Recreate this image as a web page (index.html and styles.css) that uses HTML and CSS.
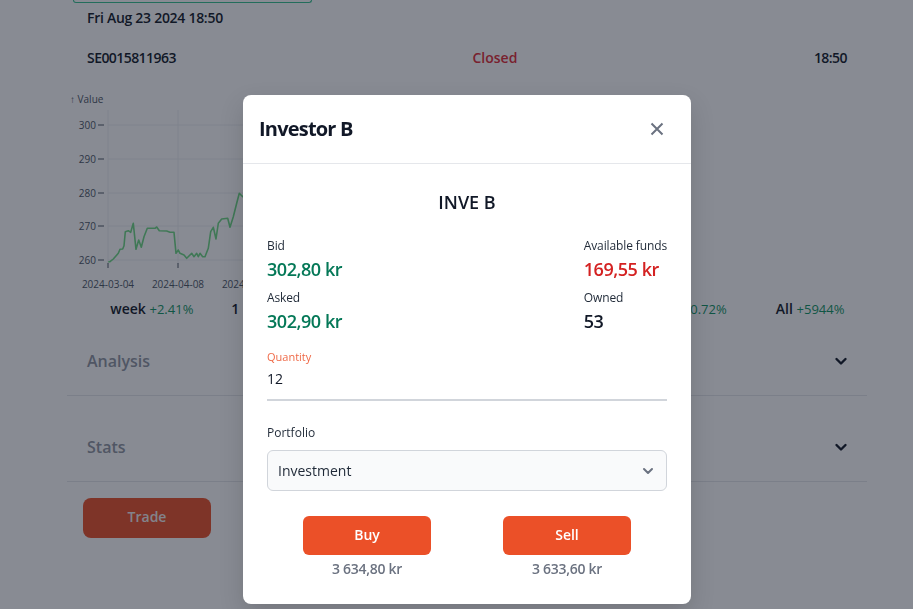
FILE: index.html
```html
<!DOCTYPE html>
<html lang="en">
<head>
    <meta charset="UTF-8">
    <meta name="viewport" content="width=device-width, initial-scale=1.0">
    <title>INVE B - Trade</title>
    <link rel="stylesheet" href="styles.css">
</head>
<body>
    <div class="page">
        <div class="top-card"></div>
        <div class="date">Fri Aug 23 2024 18:50</div>
        <div class="status-row">
            <span>SE0015811963</span>
            <span class="closed">Closed</span>
            <span>18:50</span>
        </div>
        <div class="chart">
            <svg width="800" height="200" viewBox="0 0 800 200">
                <text x="3" y="13" class="axis-label">↑ Value</text>
                <g class="grid">
                    <line x1="41" y1="35" x2="600" y2="35"/>
                    <line x1="41" y1="69" x2="600" y2="69"/>
                    <line x1="41" y1="103" x2="600" y2="103"/>
                    <line x1="41" y1="136" x2="600" y2="136"/>
                    <line x1="41" y1="170" x2="600" y2="170"/>
                    <line x1="41" y1="20" x2="41" y2="174"/>
                    <line x1="111" y1="20" x2="111" y2="174"/>
                    <line x1="181" y1="20" x2="181" y2="174"/>
                    <line x1="251" y1="20" x2="251" y2="174"/>
                    <line x1="321" y1="20" x2="321" y2="174"/>
                    <line x1="391" y1="20" x2="391" y2="174"/>
                    <line x1="461" y1="20" x2="461" y2="174"/>
                    <line x1="531" y1="20" x2="531" y2="174"/>
                </g>
                <g class="ticks">
                    <line x1="31" y1="35" x2="37" y2="35"/>
                    <line x1="31" y1="69" x2="37" y2="69"/>
                    <line x1="31" y1="103" x2="37" y2="103"/>
                    <line x1="31" y1="136" x2="37" y2="136"/>
                    <line x1="31" y1="170" x2="37" y2="170"/>
                    <line x1="41" y1="173" x2="41" y2="178"/>
                    <line x1="111" y1="173" x2="111" y2="178"/>
                    <line x1="181" y1="173" x2="181" y2="178"/>
                </g>
                <g class="axis-label" text-anchor="end">
                    <text x="29" y="38.5">300</text>
                    <text x="29" y="72.5">290</text>
                    <text x="29" y="106.5">280</text>
                    <text x="29" y="139.5">270</text>
                    <text x="29" y="173.5">260</text>
                </g>
                <g class="axis-label" text-anchor="middle">
                    <text x="41" y="197.5">2024-03-04</text>
                    <text x="111" y="197.5">2024-04-08</text>
                    <text x="181" y="197.5">2024-05-13</text>
                </g>
                <polyline class="price-line" points="41.3,171.7 43,171.7 46.3,169 51.3,163.3 53,159.3 55.7,159 57,155.7 58.3,141.7 61.3,140.7 63.7,142.3 66.3,133.3 69,159.3 71.7,150 74.3,157.3 77,146.7 80.3,138.3 88,138.3 89.7,137 92.3,140.7 99.7,141 103,142.3 107,142.3 109,163.3 111.3,160 113,163.3 117,165 119.7,168.3 124.7,163.3 127,166.7 129.7,163.3 131.3,166.7 133,163.3 135.7,166.7 138,166.7 141.3,158.3 143.7,141.7 146.3,137.3 149,149 151.3,133.3 154.7,129 160.7,128.3 163,137.3 166.3,126.7 169.7,113.3 172.3,103.3 175.7,106.7 190,100 210,90 240,80 280,60 320,50 360,40 400,30 440,25 480,20 520,15 560,10"/>
            </svg>
        </div>
        <div class="returns">
            <div class="ret">week <span class="up">+2.41%</span></div>
            <div class="ret">1 month <span class="up">+3.86%</span></div>
            <div class="ret">3 months <span class="up">+9.12%</span></div>
            <div class="ret">ytd <span class="up">+21.35%</span></div>
            <div class="ret">1 year <span class="up">+40.72%</span></div>
            <div class="ret">All <span class="up">+5944%</span></div>
        </div>
        <div class="accordion">
            <div class="acc-item">
                <span>Analysis</span>
                <svg class="chev" width="16" height="16" viewBox="0 0 16 16"><path d="M3.5 6l4.5 4.5 4.5-4.5"/></svg>
            </div>
            <div class="acc-item">
                <span>Stats</span>
                <svg class="chev" width="16" height="16" viewBox="0 0 16 16"><path d="M3.5 6l4.5 4.5 4.5-4.5"/></svg>
            </div>
        </div>
        <button class="trade">Trade</button>
    </div>

    <div class="overlay"></div>

    <div class="modal">
        <div class="modal-header">
            <h2>Investor B</h2>
            <button class="close" aria-label="Close">
                <svg width="16" height="16" viewBox="0 0 16 16"><path d="M2.5 2.5l11 11M13.5 2.5l-11 11"/></svg>
            </button>
        </div>
        <div class="modal-body">
            <h3>INVE B</h3>
            <div class="stats">
                <div>
                    <div class="stat-label">Bid</div>
                    <div class="stat-value green">302,80 kr</div>
                </div>
                <div>
                    <div class="stat-label">Available funds</div>
                    <div class="stat-value red">169,55 kr</div>
                </div>
                <div>
                    <div class="stat-label">Asked</div>
                    <div class="stat-value green">302,90 kr</div>
                </div>
                <div>
                    <div class="stat-label">Owned</div>
                    <div class="stat-value">53</div>
                </div>
            </div>
            <label class="qty-label" for="qty">Quantity</label>
            <input id="qty" class="qty-input" type="text" value="12">
            <label class="field-label" for="portfolio">Portfolio</label>
            <div class="select">
                <span>Investment</span>
                <svg width="14" height="14" viewBox="0 0 14 14"><path d="M3 5l4 4 4-4"/></svg>
            </div>
            <div class="actions">
                <div class="action">
                    <button class="btn">Buy</button>
                    <div class="total">3 634,80 kr</div>
                </div>
                <div class="action">
                    <button class="btn">Sell</button>
                    <div class="total">3 633,60 kr</div>
                </div>
            </div>
        </div>
    </div>
</body>
</html>
```

FILE: styles.css
```css
body {
    font-family: "Open Sans", "Noto Sans", sans-serif;
    margin: 0;
    padding: 0;
    background-color: white;
    color: #111827;
}
.page {
    width: 800px;
    margin-left: 67px;
}
.top-card {
    width: 237px;
    height: 2px;
    margin-left: 6px;
    border: 1px solid #34c38f;
    border-top: none;
    border-radius: 0 0 8px 8px;
}
.date {
    margin-top: 5px;
    padding-left: 20px;
    font-size: 14px;
    font-weight: 600;
    line-height: 20px;
    letter-spacing: -0.02em;
}
.status-row {
    display: flex;
    justify-content: space-between;
    margin-top: 20px;
    padding: 0 20px;
    font-size: 14px;
    font-weight: 600;
    line-height: 20px;
    letter-spacing: -0.04em;
}
.closed {
    color: #e02a35;
    letter-spacing: 0;
}
.chart {
    margin-top: 22px;
    height: 200px;
}
.chart svg {
    display: block;
}
.axis-label {
    font-size: 10px;
    fill: #4b5563;
}
.grid line {
    stroke: #eceef1;
    stroke-width: 1;
}
.ticks line {
    stroke: #4b5563;
    stroke-width: 1;
}
.price-line {
    fill: none;
    stroke: #6fd985;
    stroke-width: 1.6;
    stroke-linejoin: round;
}
.returns {
    display: grid;
    grid-template-columns: repeat(6, 1fr);
    width: 790px;
    margin-top: 9px;
    margin-left: 19px;
    font-size: 14px;
    font-weight: 600;
    line-height: 20px;
    text-align: center;
}
.up {
    color: #0f9463;
    font-size: 13px;
    font-weight: 500;
}
.accordion {
    margin-top: -9px;
}
.acc-item {
    display: flex;
    justify-content: space-between;
    align-items: center;
    padding: 39px 18px 22px 20px;
    border-bottom: 1px solid #e5e7eb;
    font-size: 16px;
    font-weight: 600;
    line-height: 24px;
    color: #8f95a1;
}
.chev path, .select path {
    fill: none;
    stroke: #111827;
    stroke-width: 2.4;
    stroke-linecap: round;
    stroke-linejoin: round;
}
.trade {
    display: block;
    width: 128px;
    height: 40px;
    margin: 16px 0 0 16px;
    padding: 0 0 3px;
    border: none;
    border-radius: 8px;
    background-color: #eb5028;
    color: #f3eeee;
    font-family: inherit;
    font-size: 14px;
    font-weight: 600;
}
.overlay {
    position: fixed;
    inset: 0;
    background-color: rgba(17, 24, 39, 0.5);
}
.modal {
    position: fixed;
    top: 95px;
    left: 243px;
    width: 448px;
    height: 509px;
    box-sizing: border-box;
    background-color: white;
    border-radius: 8px;
    box-shadow: 0 10px 25px rgba(0, 0, 0, 0.15);
}
.modal-header {
    display: flex;
    justify-content: space-between;
    align-items: center;
    height: 68px;
    padding: 0 22px 0 16px;
    border-bottom: 1px solid #e5e7eb;
}
.modal-header h2 {
    margin: 0 0 2px;
    font-size: 20px;
    font-weight: 700;
    letter-spacing: -0.04em;
}
.close {
    width: 24px;
    height: 24px;
    padding: 4px;
    border: none;
    background: none;
}
.close path {
    stroke: #6b7280;
    stroke-width: 2;
    fill: none;
}
.modal-body {
    padding: 0 24px;
}
.modal-body h3 {
    margin: 26px 0 0;
    text-align: center;
    font-size: 18px;
    font-weight: 600;
    line-height: 24px;
}
.stats {
    display: grid;
    grid-template-columns: 1fr auto;
    row-gap: 9px;
    margin-top: 24px;
}
.stat-label {
    font-size: 12px;
    line-height: 16px;
    color: #1f2937;
    letter-spacing: -0.01em;
}
.stat-value {
    margin-top: 3px;
    font-size: 18px;
    font-weight: 600;
    line-height: 24px;
    letter-spacing: -0.025em;
}
.green {
    color: #047857;
}
.red {
    color: #d42222;
}
.qty-label {
    display: block;
    margin-top: 17px;
    font-size: 11px;
    line-height: 14px;
    color: #ef6a48;
}
.qty-input {
    display: block;
    width: 100%;
    box-sizing: border-box;
    padding: 5px 0 10px;
    border: none;
    border-bottom: 2px solid #d1d5db;
    outline: none;
    font-family: inherit;
    font-size: 14px;
    line-height: 20px;
    color: #111827;
}
.field-label {
    display: block;
    margin-top: 24px;
    font-size: 12px;
    line-height: 16px;
    color: #1f2937;
}
.select {
    display: flex;
    justify-content: space-between;
    align-items: center;
    height: 41px;
    box-sizing: border-box;
    margin-top: 9px;
    padding: 0 11px 0 10px;
    border: 1px solid #d1d5db;
    border-radius: 6px;
    background-color: #f9fafb;
    font-size: 14px;
    color: #1f2937;
}
.select path {
    stroke: #6b7280;
    stroke-width: 2;
}
.actions {
    display: grid;
    grid-template-columns: 1fr 1fr;
    margin-top: 25px;
}
.action {
    display: flex;
    flex-direction: column;
    align-items: center;
}
.btn {
    width: 128px;
    height: 39px;
    padding: 0 0 2px;
    border: none;
    border-radius: 6px;
    background-color: #eb5028;
    color: white;
    font-family: inherit;
    font-size: 14px;
    font-weight: 600;
}
.total {
    margin-top: 4px;
    font-size: 14px;
    font-weight: 600;
    line-height: 20px;
    color: #6b7280;
    letter-spacing: -0.02em;
}
```
